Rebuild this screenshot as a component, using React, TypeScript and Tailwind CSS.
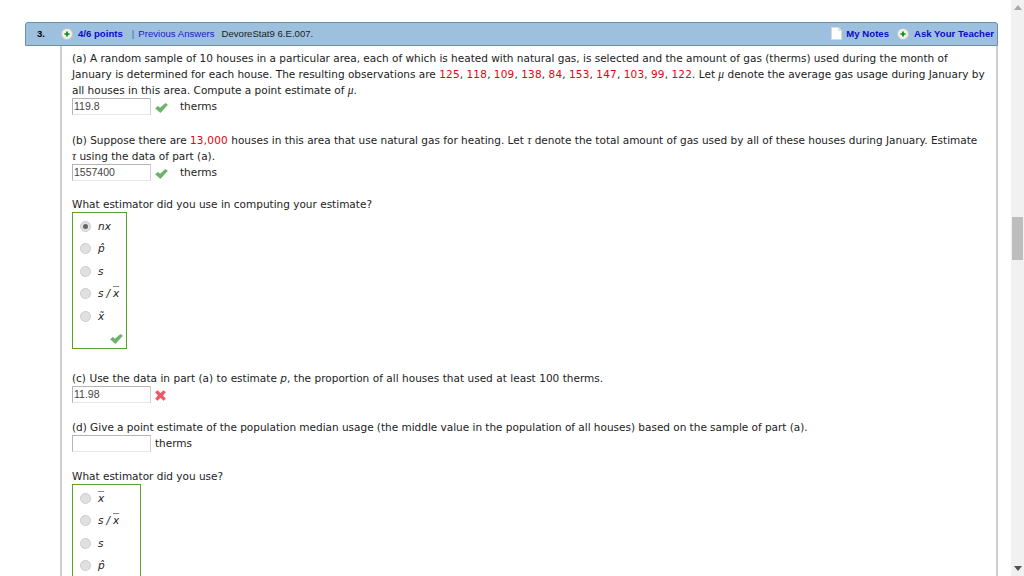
const VERDANA = { fontFamily: '"DejaVu Sans", sans-serif' }

function Red({ children }: { children: React.ReactNode }) {
  return <span className="text-[#e8000d] tracking-[0.2px]">{children}</span>
}

function Check({ className = "" }: { className?: string }) {
  return (
    <svg viewBox="0 0 18 14" className={`w-[13px] h-[10px] ${className}`}>
      <path d="M0.5 7.5 L4 4.5 L7 7 L14.5 0.5 L17.5 2.5 L7.5 13.5 Z" fill="#6cb36a" stroke="#4f9a4d" strokeWidth="0.5" />
    </svg>
  )
}

function Cross() {
  return (
    <svg viewBox="0 0 14 14" className="w-[11px] h-[11px]">
      <path d="M0.5 3 L3 0.5 L7 4 L11 0.5 L13.5 3 L10 7 L13.5 11 L11 13.5 L7 10 L3 13.5 L0.5 11 L4 7 Z" fill="#ee5a63" stroke="#e5434f" strokeWidth="0.5" />
    </svg>
  )
}

function PlusIcon() {
  return (
    <span className="w-[12px] h-[12px] rounded-full bg-[#f0f0f0] border border-[#c4c4c4] flex items-center justify-center shrink-0">
      <svg viewBox="0 0 7 7" className="w-[6px] h-[6px]">
        <path d="M2.5 0.5 H4.5 V2.5 H6.5 V4.5 H4.5 V6.5 H2.5 V4.5 H0.5 V2.5 H2.5 Z" fill="#0b8a12" />
      </svg>
    </span>
  )
}

function NoteIcon() {
  return (
    <svg viewBox="0 0 11 13" className="w-[11px] h-[13px]">
      <path d="M0.5 0.5 H7.5 L10.5 3.5 V12.5 H0.5 Z" fill="#fff" stroke="#d4dbe2" />
      <path d="M7.5 0.5 V3.5 H10.5" fill="#e8e8e8" stroke="#d4dbe2" />
    </svg>
  )
}

function Answer({ value, width = "w-[79px]" }: { value?: string; width?: string }) {
  return (
    <div
      className={`${width} h-[17px] border border-[#b5b5b5] border-b-[#e6e6e6] border-r-[#d0d0d0] pl-[1px] text-[10.5px] leading-[15px] text-[#444] shrink-0`}
      style={{ fontFamily: '"Liberation Sans", sans-serif' }}
    >
      {value}
    </div>
  )
}

function Radio({ selected, children }: { selected?: boolean; children: React.ReactNode }) {
  return (
    <div className="h-[22.5px] flex items-center">
      <span className="w-[11px] h-[11px] ml-[7px] rounded-full bg-[#e0e0e0] border border-[#cdcdcd] flex items-center justify-center shrink-0">
        {selected && <span className="w-[5px] h-[5px] rounded-full bg-[#666]" />}
      </span>
      <span className="ml-[7px] mt-[1px] italic text-[10.5px] text-[#222]">{children}</span>
    </div>
  )
}

function SOverX() {
  return (
    <>
      s<span className="mx-[3px]">/</span><span className="overline decoration-[#888]">x</span>
    </>
  )
}

function Line({ children }: { children: React.ReactNode }) {
  return <div className="h-4 leading-4 whitespace-nowrap">{children}</div>
}

function Greek({ children }: { children: React.ReactNode }) {
  return <i className="text-[11.5px]" style={{ fontFamily: '"Liberation Serif", serif' }}>{children}</i>
}

export default function App() {
  return (
    <div className="w-[1024px] h-[576px] overflow-hidden bg-white flex text-[#222]" style={VERDANA}>
      <div className="w-[1011px] pt-[22px] pl-[25px]">
        {/* Question header */}
        <div
          className="w-[973px] h-[24px] bg-[#9dc0de] border border-[#6e8ea8] rounded-t-[3px] flex items-center text-[9.6px] text-black"
          style={{ fontFamily: '"Liberation Sans", sans-serif' }}
        >
          <span className="ml-[11px] w-[24px] font-bold">3.</span>
          <PlusIcon />
          <span className="ml-[5px] font-bold text-[#0a0ac8]">4/6 points</span>
          <span className="ml-[9px] text-[#3a6ea0]">|</span>
          <span className="ml-[4px] text-[#1a1ac0]">Previous Answers</span>
          <span className="ml-[7px] text-[#222]">DevoreStat9 6.E.007.</span>
          <div className="ml-auto mr-[3px] flex items-center">
            <NoteIcon />
            <span className="ml-[4px] font-bold text-[#0a0ac8]">My Notes</span>
            <span className="ml-[8px]"><PlusIcon /></span>
            <span className="ml-[5px] font-bold text-[#0a0ac8]">Ask Your Teacher</span>
          </div>
        </div>

        {/* Question body */}
        <div className="ml-[35px] w-[938px] h-[530px] border-l-2 border-r-2 border-[#cfcfcf] pl-[10px] pt-1 text-[10.5px]">
          <Line>(a) A random sample of 10 houses in a particular area, each of which is heated with natural gas, is selected and the amount of gas (therms) used during the month of</Line>
          <Line>
            January is determined for each house. The resulting observations are <Red>125</Red>, <Red>118</Red>, <Red>109</Red>, <Red>138</Red>, <Red>84</Red>, <Red>153</Red>, <Red>147</Red>, <Red>103</Red>, <Red>99</Red>, <Red>122</Red>. Let <Greek>μ</Greek> denote the average gas usage during January by
          </Line>
          <Line>all houses in this area. Compute a point estimate of <Greek>μ</Greek>.</Line>
          <div className="flex items-center h-[17px]">
            <Answer value="119.8" />
            <Check className="ml-[4px] mt-[2px]" />
            <span className="ml-[12px] mt-[1px]">therms</span>
          </div>

          <div className="mt-[17px]">
            <Line>(b) Suppose there are <Red>13,000</Red> houses in this area that use natural gas for heating. Let <Greek>τ</Greek> denote the total amount of gas used by all of these houses during January. Estimate</Line>
            <Line><Greek>τ</Greek> using the data of part (a).</Line>
          </div>
          <div className="flex items-center h-[17px]">
            <Answer value="1557400" />
            <Check className="ml-[4px] mt-[2px]" />
            <span className="ml-[12px] mt-[1px]">therms</span>
          </div>

          <div className="mt-[15px]"><Line>What estimator did you use in computing your estimate?</Line></div>
          <div className="w-[55px] h-[137px] border border-[#5aa02c] pt-[2px]">
            <Radio selected>nx</Radio>
            <Radio>p̂</Radio>
            <Radio>s</Radio>
            <Radio><SOverX /></Radio>
            <Radio>x̃</Radio>
            <div className="flex justify-end pr-[3px] mt-[6px]"><Check /></div>
          </div>

          <div className="mt-[21px] [word-spacing:0.15px]"><Line>(c) Use the data in part (a) to estimate <i>p</i>, the proportion of all houses that used at least 100 therms.</Line></div>
          <div className="flex items-center h-[17px]">
            <Answer value="11.98" />
            <span className="ml-[4px] mt-[2px]"><Cross /></span>
          </div>

          <div className="mt-[16px] [word-spacing:-0.08px]"><Line>(d) Give a point estimate of the population median usage (the middle value in the population of all houses) based on the sample of part (a).</Line></div>
          <div className="flex items-center h-[17px]">
            <Answer />
            <span className="ml-[4px] mt-[1px]">therms</span>
          </div>

          <div className="mt-[16px]"><Line>What estimator did you use?</Line></div>
          <div className="w-[69px] h-[100px] border border-[#5aa02c] pt-[2px]">
            <Radio><span className="overline decoration-[#888]">x</span></Radio>
            <Radio><SOverX /></Radio>
            <Radio>s</Radio>
            <Radio>p̂</Radio>
          </div>
        </div>
      </div>

      {/* Scrollbar */}
      <div className="w-[13px] h-[576px] bg-[#f1f1f1] flex flex-col items-center">
        <svg viewBox="0 0 8 5" className="w-[8px] h-[5px] mt-[5px]"><path d="M4 0 L8 5 H0 Z" fill="#a8a8a8" /></svg>
        <div className="w-[11px] h-[43px] mt-[207px] bg-[#bdbdbd]" />
        <svg viewBox="0 0 8 5" className="w-[8px] h-[5px] mt-auto mb-[5px]"><path d="M0 0 H8 L4 5 Z" fill="#505050" /></svg>
      </div>
    </div>
  )
}
